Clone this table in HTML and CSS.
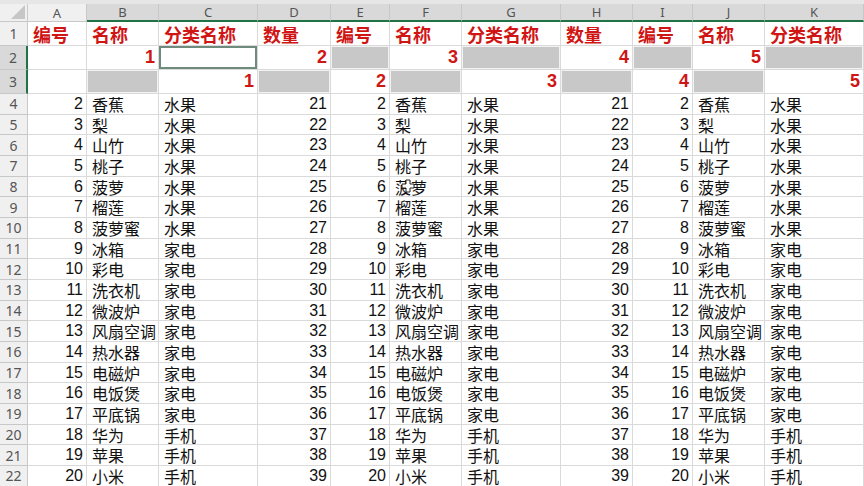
FILE: index.html
```html
<!DOCTYPE html>
<html lang="zh-CN">
<head>
<meta charset="utf-8">
<title>Sheet</title>
<link rel="stylesheet" href="styles.css">
</head>
<body>
<div class="band"></div>
<div class="sheet">
  <div class="corner"><svg class="tri" width="14" height="14" viewBox="0 0 14 14"><polygon points="14,0 14,14 0,14" fill="#c6c6c6"/></svg></div>
  <div class="ch">A</div><div class="ch sel">B</div><div class="ch sel">C</div><div class="ch sel">D</div><div class="ch sel">E</div><div class="ch sel">F</div><div class="ch sel">G</div><div class="ch sel">H</div><div class="ch sel">I</div><div class="ch sel">J</div><div class="ch sel">K</div>

  <div class="rh">1</div><div class="c hd">编号</div><div class="c hd">名称</div><div class="c hd">分类名称</div><div class="c hd">数量</div><div class="c hd">编号</div><div class="c hd">名称</div><div class="c hd">分类名称</div><div class="c hd">数量</div><div class="c hd">编号</div><div class="c hd">名称</div><div class="c hd">分类名称</div>

  <div class="rh rsel">2</div><div class="c"></div><div class="c r">1</div><div class="c act"></div><div class="c r">2</div><div class="c g"></div><div class="c r">3</div><div class="c g"></div><div class="c r">4</div><div class="c g"></div><div class="c r">5</div><div class="c g"></div>

  <div class="rh rsel">3</div><div class="c"></div><div class="c g"></div><div class="c r">1</div><div class="c g"></div><div class="c r">2</div><div class="c g"></div><div class="c r">3</div><div class="c g"></div><div class="c r">4</div><div class="c g"></div><div class="c r">5</div>

  <div class="rh">4</div><div class="c n">2</div><div class="c t">香蕉</div><div class="c t">水果</div><div class="c n">21</div><div class="c n">2</div><div class="c t">香蕉</div><div class="c t">水果</div><div class="c n">21</div><div class="c n">2</div><div class="c t">香蕉</div><div class="c t">水果</div>
  <div class="rh">5</div><div class="c n">3</div><div class="c t">梨</div><div class="c t">水果</div><div class="c n">22</div><div class="c n">3</div><div class="c t">梨</div><div class="c t">水果</div><div class="c n">22</div><div class="c n">3</div><div class="c t">梨</div><div class="c t">水果</div>
  <div class="rh">6</div><div class="c n">4</div><div class="c t">山竹</div><div class="c t">水果</div><div class="c n">23</div><div class="c n">4</div><div class="c t">山竹</div><div class="c t">水果</div><div class="c n">23</div><div class="c n">4</div><div class="c t">山竹</div><div class="c t">水果</div>
  <div class="rh">7</div><div class="c n">5</div><div class="c t">桃子</div><div class="c t">水果</div><div class="c n">24</div><div class="c n">5</div><div class="c t">桃子</div><div class="c t">水果</div><div class="c n">24</div><div class="c n">5</div><div class="c t">桃子</div><div class="c t">水果</div>
  <div class="rh">8</div><div class="c n">6</div><div class="c t">菠萝</div><div class="c t">水果</div><div class="c n">25</div><div class="c n">6</div><div class="c t cur">菠萝<svg class="pointer" width="14" height="14" viewBox="0 0 14 14"><path d="M5 1h4v4h4v4h-4v4h-4v-4h-4v-4h4z" fill="#fff" stroke="#222" stroke-width="1"/></svg></div><div class="c t">水果</div><div class="c n">25</div><div class="c n">6</div><div class="c t">菠萝</div><div class="c t">水果</div>
  <div class="rh">9</div><div class="c n">7</div><div class="c t">榴莲</div><div class="c t">水果</div><div class="c n">26</div><div class="c n">7</div><div class="c t">榴莲</div><div class="c t">水果</div><div class="c n">26</div><div class="c n">7</div><div class="c t">榴莲</div><div class="c t">水果</div>
  <div class="rh">10</div><div class="c n">8</div><div class="c t">菠萝蜜</div><div class="c t">水果</div><div class="c n">27</div><div class="c n">8</div><div class="c t">菠萝蜜</div><div class="c t">水果</div><div class="c n">27</div><div class="c n">8</div><div class="c t">菠萝蜜</div><div class="c t">水果</div>
  <div class="rh">11</div><div class="c n">9</div><div class="c t">冰箱</div><div class="c t">家电</div><div class="c n">28</div><div class="c n">9</div><div class="c t">冰箱</div><div class="c t">家电</div><div class="c n">28</div><div class="c n">9</div><div class="c t">冰箱</div><div class="c t">家电</div>
  <div class="rh">12</div><div class="c n">10</div><div class="c t">彩电</div><div class="c t">家电</div><div class="c n">29</div><div class="c n">10</div><div class="c t">彩电</div><div class="c t">家电</div><div class="c n">29</div><div class="c n">10</div><div class="c t">彩电</div><div class="c t">家电</div>
  <div class="rh">13</div><div class="c n">11</div><div class="c t">洗衣机</div><div class="c t">家电</div><div class="c n">30</div><div class="c n">11</div><div class="c t">洗衣机</div><div class="c t">家电</div><div class="c n">30</div><div class="c n">11</div><div class="c t">洗衣机</div><div class="c t">家电</div>
  <div class="rh">14</div><div class="c n">12</div><div class="c t">微波炉</div><div class="c t">家电</div><div class="c n">31</div><div class="c n">12</div><div class="c t">微波炉</div><div class="c t">家电</div><div class="c n">31</div><div class="c n">12</div><div class="c t">微波炉</div><div class="c t">家电</div>
  <div class="rh">15</div><div class="c n">13</div><div class="c t">风扇空调</div><div class="c t">家电</div><div class="c n">32</div><div class="c n">13</div><div class="c t">风扇空调</div><div class="c t">家电</div><div class="c n">32</div><div class="c n">13</div><div class="c t">风扇空调</div><div class="c t">家电</div>
  <div class="rh">16</div><div class="c n">14</div><div class="c t">热水器</div><div class="c t">家电</div><div class="c n">33</div><div class="c n">14</div><div class="c t">热水器</div><div class="c t">家电</div><div class="c n">33</div><div class="c n">14</div><div class="c t">热水器</div><div class="c t">家电</div>
  <div class="rh">17</div><div class="c n">15</div><div class="c t">电磁炉</div><div class="c t">家电</div><div class="c n">34</div><div class="c n">15</div><div class="c t">电磁炉</div><div class="c t">家电</div><div class="c n">34</div><div class="c n">15</div><div class="c t">电磁炉</div><div class="c t">家电</div>
  <div class="rh">18</div><div class="c n">16</div><div class="c t">电饭煲</div><div class="c t">家电</div><div class="c n">35</div><div class="c n">16</div><div class="c t">电饭煲</div><div class="c t">家电</div><div class="c n">35</div><div class="c n">16</div><div class="c t">电饭煲</div><div class="c t">家电</div>
  <div class="rh">19</div><div class="c n">17</div><div class="c t">平底锅</div><div class="c t">家电</div><div class="c n">36</div><div class="c n">17</div><div class="c t">平底锅</div><div class="c t">家电</div><div class="c n">36</div><div class="c n">17</div><div class="c t">平底锅</div><div class="c t">家电</div>
  <div class="rh">20</div><div class="c n">18</div><div class="c t">华为</div><div class="c t">手机</div><div class="c n">37</div><div class="c n">18</div><div class="c t">华为</div><div class="c t">手机</div><div class="c n">37</div><div class="c n">18</div><div class="c t">华为</div><div class="c t">手机</div>
  <div class="rh">21</div><div class="c n">19</div><div class="c t">苹果</div><div class="c t">手机</div><div class="c n">38</div><div class="c n">19</div><div class="c t">苹果</div><div class="c t">手机</div><div class="c n">38</div><div class="c n">19</div><div class="c t">苹果</div><div class="c t">手机</div>
  <div class="rh">22</div><div class="c n">20</div><div class="c t">小米</div><div class="c t">手机</div><div class="c n">39</div><div class="c n">20</div><div class="c t">小米</div><div class="c t">手机</div><div class="c n">39</div><div class="c n">20</div><div class="c t">小米</div><div class="c t">手机</div>
</div>
</body>
</html>
```

FILE: styles.css
```css
html, body {
  margin: 0;
  padding: 0;
  width: 864px;
  height: 486px;
  overflow: hidden;
  background: #ffffff;
  font-family: "Liberation Sans", "Noto Sans CJK SC", sans-serif;
}

.band {
  height: 4px;
  background: #e6e6e6;
}

.sheet {
  display: grid;
  grid-template-columns: 28px 59px 72px 99px 73px 59px 72px 99px 72px 60px 72px 99px;
  grid-template-rows: 18px 24px 24px 24px repeat(19, 20.68px);
}

.sheet > div {
  box-sizing: border-box;
  border-right: 1px solid #dadada;
  border-bottom: 1px solid #dadada;
  overflow: hidden;
  white-space: nowrap;
  display: flex;
  align-items: center;
  min-width: 0;
}

.corner {
  background: #f0f0f0;
  justify-content: flex-end;
  align-items: flex-end !important;
  padding: 0 2px 2px 0;
  border-color: #c8c8c8 !important;
}

.ch {
  background: #f0f0f0;
  justify-content: center;
  font-family: "Noto Sans", "Liberation Sans", sans-serif;
  font-size: 13px;
  color: #555555;
  border-color: #c8c8c8 !important;
}

.ch.sel {
  background: #d9d9d9;
  border-bottom: 2px solid #217346 !important;
}

.rh {
  background: #f0f0f0;
  justify-content: center;
  font-family: "Noto Sans", "Liberation Sans", sans-serif;
  font-size: 14px;
  color: #555555;
  border-color: #c8c8c8 !important;
}

.rh.rsel {
  background: #d9d9d9;
  border-right: 2px solid #217346 !important;
}

.c {
  padding: 0 3px;
  font-size: 16px;
  color: #111111;
}

.hd {
  font-size: 18px;
  font-weight: bold;
  color: #d01515;
  padding-left: 5px;
}

.r {
  justify-content: flex-end;
  font-size: 18px;
  font-weight: bold;
  color: #d01515;
}

.n {
  justify-content: flex-end;
}

.t {
  justify-content: flex-start;
  padding-left: 5px;
}

.g {
  background: #c8c8c8;
  box-shadow: inset 0 0 0 1px #f2f2f2;
}

.act {
  box-shadow: inset 0 0 0 2px #6f8b7d;
}

.cur {
  position: relative;
}

.pointer {
  position: absolute;
  left: 11px;
  top: 2px;
}
```
